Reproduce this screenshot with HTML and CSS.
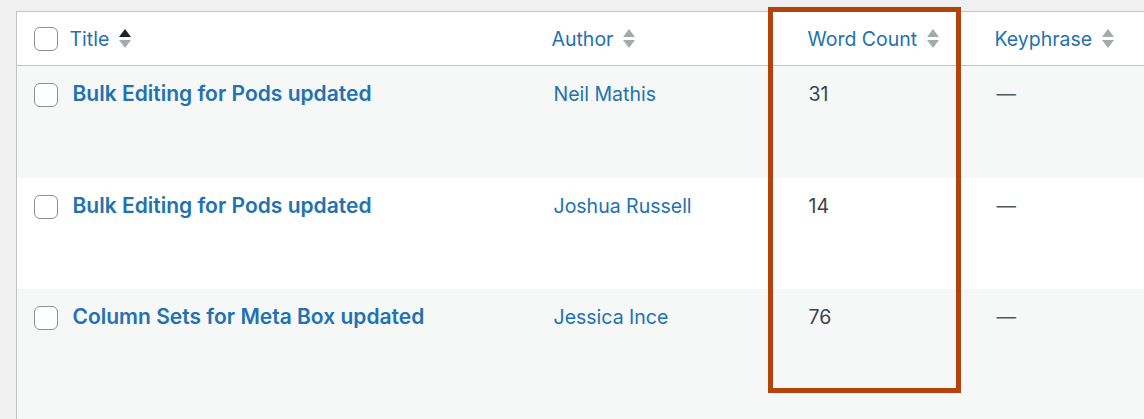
FILE: index.html
```html
<!DOCTYPE html>
<html lang="en">
<head>
    <meta charset="UTF-8">
    <title>Posts - Word Count</title>
    <link rel="stylesheet" href="styles.css">
</head>
<body>
    <!-- Posts list table -->
    <div class="list-wrap">
        <table class="posts-table">
            <colgroup>
                <col class="col-check">
                <col class="col-title">
                <col class="col-author">
                <col class="col-words">
                <col class="col-keyphrase">
            </colgroup>
            <thead>
                <tr>
                    <th class="check-column"><span class="checkbox"></span></th>
                    <th>
                        <a href="#" class="sort-link">Title
                            <svg class="sort-icon" width="12" height="20" viewBox="0 0 12 20"><path d="M0 8 L6 0 L12 8 Z" fill="#1d2327"/><path d="M0 11 L12 11 L6 19 Z" fill="#a7aaad"/></svg>
                        </a>
                    </th>
                    <th class="author-head">
                        <a href="#" class="sort-link">Author
                            <svg class="sort-icon" width="12" height="20" viewBox="0 0 12 20"><path d="M0 8 L6 0 L12 8 Z" fill="#a7aaad"/><path d="M0 11 L12 11 L6 19 Z" fill="#a7aaad"/></svg>
                        </a>
                    </th>
                    <th class="words-head">
                        <a href="#" class="sort-link">Word Count
                            <svg class="sort-icon" width="12" height="20" viewBox="0 0 12 20"><path d="M0 8 L6 0 L12 8 Z" fill="#a7aaad"/><path d="M0 11 L12 11 L6 19 Z" fill="#a7aaad"/></svg>
                        </a>
                    </th>
                    <th class="keyphrase-head">
                        <a href="#" class="sort-link">Keyphrase
                            <svg class="sort-icon" width="12" height="20" viewBox="0 0 12 20"><path d="M0 8 L6 0 L12 8 Z" fill="#a7aaad"/><path d="M0 11 L12 11 L6 19 Z" fill="#a7aaad"/></svg>
                        </a>
                    </th>
                </tr>
            </thead>
            <tbody>
                <tr class="alt first">
                    <td class="check-column"><span class="checkbox"></span></td>
                    <td><a href="#" class="row-title">Bulk Editing for Pods updated</a></td>
                    <td class="author-cell"><a href="#">Neil Mathis</a></td>
                    <td class="words-cell">31</td>
                    <td class="keyphrase-cell">—</td>
                </tr>
                <tr>
                    <td class="check-column"><span class="checkbox"></span></td>
                    <td><a href="#" class="row-title">Bulk Editing for Pods updated</a></td>
                    <td class="author-cell"><a href="#">Joshua Russell</a></td>
                    <td class="words-cell">14</td>
                    <td class="keyphrase-cell">—</td>
                </tr>
                <tr class="alt last">
                    <td class="check-column"><span class="checkbox"></span></td>
                    <td><a href="#" class="row-title">Column Sets for Meta Box updated</a></td>
                    <td class="author-cell"><a href="#">Jessica Ince</a></td>
                    <td class="words-cell">76</td>
                    <td class="keyphrase-cell">—</td>
                </tr>
            </tbody>
        </table>

        <!-- Annotation box around the Word Count column -->
        <div class="highlight"></div>
    </div>
</body>
</html>
```

FILE: styles.css
```css
/* General styles */
body {
    margin: 0;
    padding: 0;
    background-color: #f0f0f1;
    font-family: Inter, "Noto Sans", sans-serif;
    color: #3c434a;
    overflow: hidden; /* table runs past the right edge */
}

a {
    color: #2271b1;
    text-decoration: none;
}

/* Wrapper holds the table and the annotation */
.list-wrap {
    position: relative;
    margin: 11px 0 0 16px;
    width: 1160px;
}

.posts-table {
    width: 1160px;
    table-layout: fixed;
    border-collapse: collapse;
    border: 1px solid #c3c4c7;
    border-bottom: none;
    background-color: #fff;
}

.col-check { width: 46px; }
.col-title { width: 478px; }
.col-author { width: 256px; }
.col-words { width: 186px; }
.col-keyphrase { width: 194px; }

/* Header row */
thead th {
    height: 53px;
    padding: 0 0 0 7px;
    text-align: left;
    font-weight: 400;
    font-size: 19.5px;
    border-bottom: 1px solid #c3c4c7;
    vertical-align: middle;
}

thead th.check-column {
    padding-left: 17px;
}

th.author-head { padding-left: 11px; }
th.words-head { padding-left: 11px; }
th.keyphrase-head { padding-left: 12px; }

.sort-link {
    display: inline-flex;
    align-items: center;
    gap: 10px;
}

.sort-icon {
    display: block;
    margin-top: 1px;
}

/* Body rows */
tbody tr {
    height: 111px;
}

tbody tr.first {
    height: 112px;
}

tbody tr.alt {
    background-color: #f6f7f7;
}

tbody tr.last {
    height: 140px;
}

tbody td {
    padding: 14px 0 0 10px;
    vertical-align: top;
    font-size: 19.5px;
    line-height: 28px;
}

tbody td.check-column {
    padding: 17px 0 0 17px;
}

td.author-cell { padding-left: 13px; }
td.words-cell { padding-left: 12px; }
td.keyphrase-cell { padding-left: 14px; color: #50575e; }

.row-title {
    font-size: 21px;
    font-weight: 600;
}

/* Checkbox look */
.checkbox {
    display: block;
    width: 24px;
    height: 24px;
    box-sizing: border-box;
    border: 1px solid #8c8f94;
    border-radius: 6px;
    background-color: #fff;
}

/* Red outline drawn over the Word Count column */
.highlight {
    position: absolute;
    top: -4px;
    left: 752px;
    width: 193px;
    height: 386px;
    box-sizing: border-box;
    border: 5px solid #b3430b;
}
```
